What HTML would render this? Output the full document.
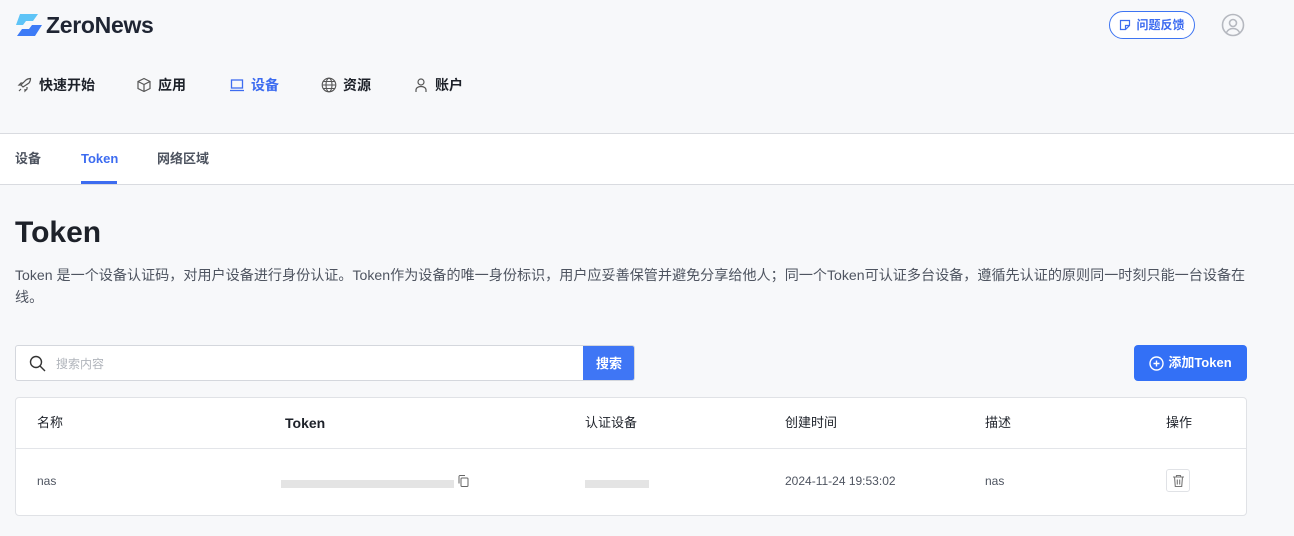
<!DOCTYPE html>
<html><head><meta charset="utf-8"><style>
*{box-sizing:border-box;margin:0;padding:0}
body{width:1294px;height:536px;overflow:hidden;background:#f7f8fa;font-family:"Liberation Sans","Noto Sans CJK SC",sans-serif;color:#1d2129;position:relative}
.abs{position:absolute;line-height:20px}
.nav{font-size:14px;font-weight:bold;display:flex;align-items:center;gap:6px}
.nav svg{width:16px;height:16px}
.t{font-size:13px;height:20px;display:flex;align-items:center}
</style></head><body>
<svg class="abs" style="left:15px;top:14px" width="28" height="22" viewBox="0 0 28 22"><path d="M5 0h18l-5 7H11L8 11H1z" fill="#5ec4f7"/><path d="M27 11L20 22H2l5-7h7l3-4z" fill="#3d7bf6"/></svg>
<div class="abs" style="left:46px;top:12px;font-size:23px;line-height:26px;font-weight:bold;color:#1f2533;letter-spacing:-0.3px">ZeroNews</div>
<div class="abs" style="left:1109px;top:11px;width:86px;height:28px;border:1px solid #3d74f2;border-radius:14px;color:#3d6cf0;font-size:12px;font-weight:bold;display:flex;align-items:center;justify-content:center;gap:5px;background:#fff"><svg width="12" height="12" viewBox="0 0 12 12"><path d="M1.5 1.5h9v5l-4 4h-5z M6.5 10.5v-4h4" fill="none" stroke="#3d6cf0" stroke-width="1.2"/></svg>问题反馈</div>
<svg class="abs" style="left:1221px;top:13px" width="24" height="24" viewBox="0 0 24 24" fill="none" stroke="#b5b8bf" stroke-width="1.6"><circle cx="12" cy="12" r="10.5"/><circle cx="12" cy="10" r="3.5"/><path d="M5.5 19.5c1.5-3 4-4 6.5-4s5 1 6.5 4"/></svg>
<div class="abs nav" style="left:17px;top:75px"><svg viewBox="0 0 16 16" fill="none" stroke="#555" stroke-width="1.2"><path d="M6 10l-2-2 5-5c1.5-1.2 3.5-1.5 4.5-1.5 0 1-.3 3-1.5 4.5zM4 8H2l2-2h2M8 12v2l2-2v-2M4 12l-2 2"/></svg>快速开始</div>
<div class="abs nav" style="left:136px;top:75px"><svg viewBox="0 0 16 16" fill="none" stroke="#555" stroke-width="1.2"><path d="M8 1.5l6 3v7l-6 3-6-3v-7zM2 4.5l6 3 6-3M8 7.5v7"/></svg>应用</div>
<div class="abs nav" style="left:229px;top:75px;color:#3d6cf0"><svg viewBox="0 0 16 16" fill="none" stroke="#3d6cf0" stroke-width="1.3"><rect x="2.5" y="3" width="11" height="8"/><path d="M1 13.5h14"/></svg>设备</div>
<div class="abs nav" style="left:321px;top:75px"><svg viewBox="0 0 16 16" fill="none" stroke="#555" stroke-width="1.1"><circle cx="8" cy="8" r="6.8"/><ellipse cx="8" cy="8" rx="3" ry="6.8"/><path d="M1.2 8h13.6M2.2 4.5h11.6M2.2 11.5h11.6"/></svg>资源</div>
<div class="abs nav" style="left:413px;top:75px"><svg viewBox="0 0 16 16" fill="none" stroke="#555" stroke-width="1.2"><circle cx="8" cy="5" r="3"/><path d="M3 15v-2c0-2 2-3.5 5-3.5s5 1.5 5 3.5v2"/></svg>账户</div>
<div class="abs" style="left:0;top:133px;width:1294px;height:52px;background:#fff;border-top:1px solid #d9dbe0;border-bottom:1px solid #d9dbe0"></div>
<div class="abs t" style="left:15px;top:149px;font-weight:bold;color:#4e5460">设备</div>
<div class="abs t" style="left:81px;top:149px;font-weight:bold;color:#3d6cf0">Token</div>
<div class="abs" style="left:81px;top:181px;width:36px;height:3px;background:#3d6cf0"></div>
<div class="abs t" style="left:157px;top:149px;font-weight:bold;color:#4e5460">网络区域</div>
<div class="abs" style="left:15px;top:215px;font-size:30px;line-height:36px;font-weight:bold;color:#1d2129">Token</div>
<div class="abs" style="left:15px;top:264px;width:1270px;font-size:14.1px;line-height:22px;color:#4e5460;white-space:nowrap">Token 是一个设备认证码，对用户设备进行身份认证。Token作为设备的唯一身份标识，用户应妥善保管并避免分享给他人；同一个Token可认证多台设备，遵循先认证的原则同一时刻只能一台设备在<br>线。</div>
<div class="abs" style="left:15px;top:345px;width:620px;height:36px;background:#fff;border:1px solid #d4d7dd;border-radius:3px;overflow:hidden">
<svg class="abs" style="left:13px;top:9px" width="17" height="17" viewBox="0 0 17 17" fill="none" stroke="#333" stroke-width="1.4"><circle cx="7" cy="7" r="5.5"/><path d="M11 11l5 5"/></svg>
<div class="abs" style="left:40px;top:8px;font-size:12px;color:#b0b4bb">搜索内容</div>
<div class="abs" style="left:567px;top:0;width:52px;height:36px;background:#3f76f5;color:#fff;font-size:13px;font-weight:bold;display:flex;align-items:center;justify-content:center">搜索</div>
</div>
<div class="abs" style="left:1134px;top:345px;width:113px;height:36px;background:#3370f6;border-radius:4px;color:#fff;font-size:13px;font-weight:bold;display:flex;align-items:center;justify-content:center;gap:4px"><svg width="15" height="15" viewBox="0 0 15 15" fill="none" stroke="#fff" stroke-width="1.4"><circle cx="7.5" cy="7.5" r="6.5"/><path d="M7.5 4.5v6M4.5 7.5h6"/></svg>添加Token</div>
<div class="abs" style="left:15px;top:397px;width:1232px;height:119px;background:#fff;border:1px solid #e0e2e6;border-radius:4px"></div>
<div class="abs" style="left:16px;top:448px;width:1230px;height:1px;background:#e3e5e9"></div>
<div class="abs t" style="top:413px;left:37px">名称</div>
<div class="abs t" style="top:413px;left:285px;font-weight:bold;font-size:14px">Token</div>
<div class="abs t" style="top:413px;left:585px">认证设备</div>
<div class="abs t" style="top:413px;left:785px">创建时间</div>
<div class="abs t" style="top:413px;left:985px">描述</div>
<div class="abs t" style="top:413px;left:1166px">操作</div>
<div class="abs t" style="top:471px;left:37px;font-size:12px;color:#4e5460">nas</div>
<div class="abs" style="top:480px;left:281px;width:173px;height:8px;background:#e4e4e4"></div>
<svg class="abs" style="left:458px;top:475px" width="11" height="12" viewBox="0 0 11 12" fill="none" stroke="#666" stroke-width="1"><rect x="3" y="3" width="7" height="8.5" rx="1"/><path d="M1 8.5V1.5a1 1 0 0 1 1-1h5"/></svg>
<div class="abs" style="top:480px;left:585px;width:64px;height:8px;background:#e4e4e4"></div>
<div class="abs t" style="top:471px;left:785px;font-size:12px;color:#4e5460">2024-11-24 19:53:02</div>
<div class="abs t" style="top:471px;left:985px;font-size:12px;color:#4e5460">nas</div>
<div class="abs" style="left:1166px;top:469px;width:24px;height:23px;border:1px solid #e0e2e6;border-radius:3px;background:#fff"><svg class="abs" style="left:5px;top:4px" width="13" height="14" viewBox="0 0 13 14" fill="none" stroke="#777" stroke-width="1.1"><path d="M1 3h11M4.5 3V1.5h4V3M2.5 3l.8 9.5h6.4l.8-9.5M5.3 5.5v5M7.7 5.5v5"/></svg></div>
</body></html>
